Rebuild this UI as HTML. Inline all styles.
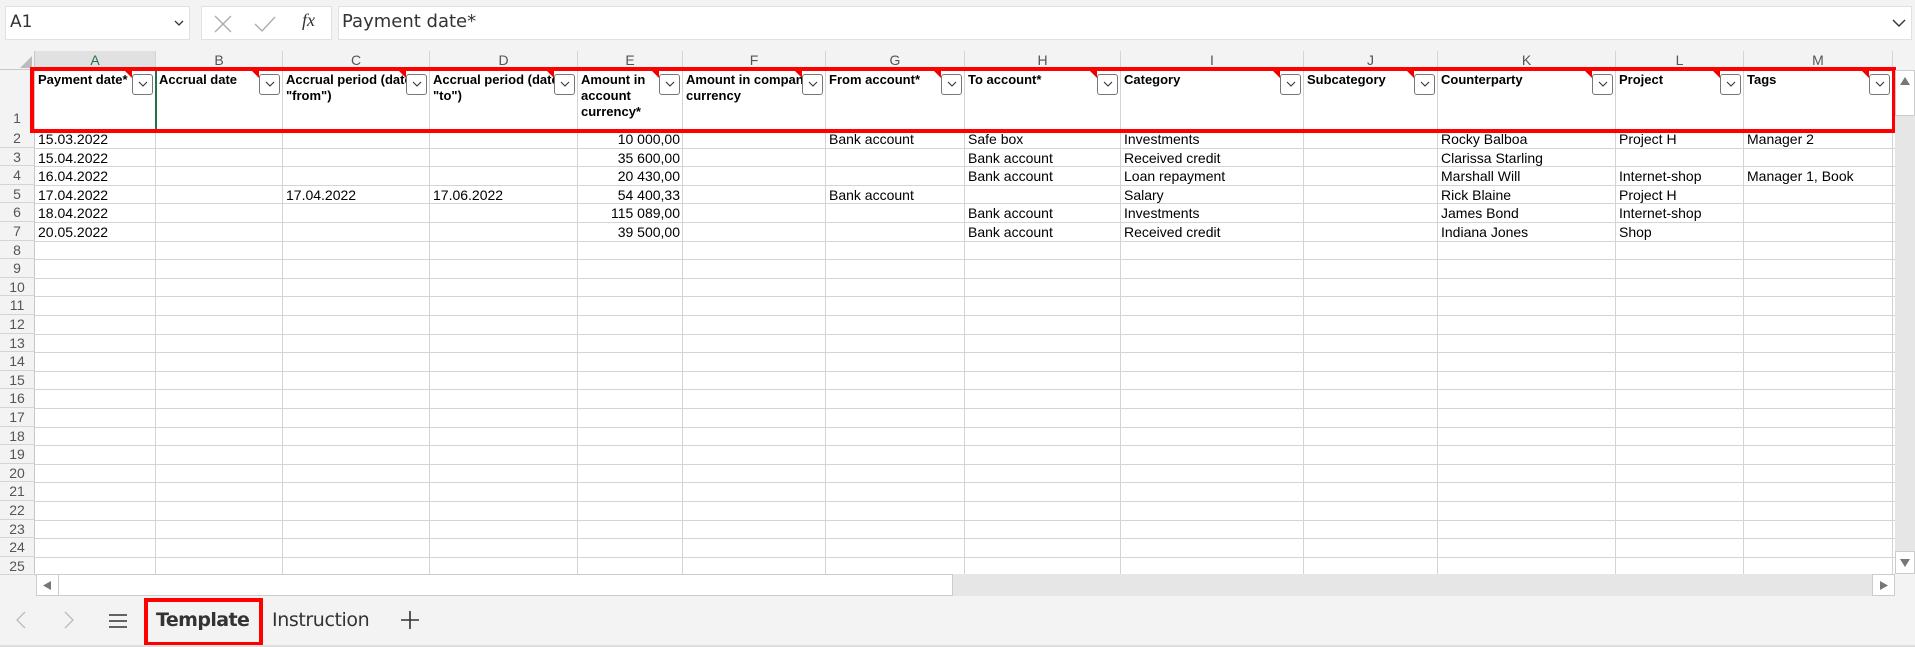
<!DOCTYPE html>
<html><head><meta charset="utf-8">
<style>
*{box-sizing:border-box;margin:0;padding:0}
body{width:1915px;height:647px;overflow:hidden;background:#f3f3f3;font-family:"Liberation Sans",Arial,sans-serif;position:relative}
.abs{position:absolute}
.cell{position:absolute;font-size:14px;color:#000;white-space:nowrap;overflow:hidden;line-height:18px;padding-left:3px}
.hd{position:absolute;top:51px;height:19px;font-size:14px;color:#555;text-align:center;line-height:19px;background:#f3f3f3;border-right:1px solid #d4d4d4;border-bottom:1px solid #d4d4d4}
.rn{position:absolute;left:0;width:35px;font-size:14px;color:#555;text-align:center;background:#f3f3f3;border-bottom:1px solid #d4d4d4;border-right:1px solid #c8c8c8}
.h1{position:absolute;top:72px;font-size:13px;font-weight:bold;line-height:16px;white-space:normal;overflow:hidden;padding-left:3px}
.btn{position:absolute;top:74px;width:21px;height:21px;border:1px solid #777;border-radius:3px;background:#fff}
.btn svg{position:absolute;left:5px;top:6px}
.tri{position:absolute;top:71px;width:0;height:0;border-top:7px solid #e00;border-left:7px solid transparent}
</style></head><body>
<!-- top bar -->
<div class="abs" style="left:5px;top:6px;width:185px;height:34px;background:#fff;border:1px solid #e1e1e1"></div>
<div class="abs" style="left:10px;top:12px;font-size:17px;color:#333;font-family:'DejaVu Sans',sans-serif">A1</div>
<svg class="abs" style="left:174px;top:20px" width="10" height="7"><path d="M1 1 L5 5 L9 1" stroke="#333" stroke-width="1.3" fill="none"/></svg>
<div class="abs" style="left:201px;top:6px;width:131px;height:34px;background:#fff;border:1px solid #e1e1e1"></div>
<svg class="abs" style="left:213px;top:14px" width="20" height="20"><path d="M2 2 L18 18 M18 2 L2 18" stroke="#aaa" stroke-width="1.3"/></svg>
<svg class="abs" style="left:253px;top:14px" width="24" height="20"><path d="M2 10 L9 17 L22 3" stroke="#aaa" stroke-width="1.3" fill="none"/></svg>
<div class="abs" style="left:302px;top:10px;font-size:18px;font-style:italic;font-family:'Liberation Serif',serif;color:#333">fx</div>
<div class="abs" style="left:338px;top:6px;width:1574px;height:34px;background:#fff;border:1px solid #e1e1e1"></div>
<div class="abs" style="left:342px;top:11px;font-size:18px;color:#333;font-family:'DejaVu Sans',sans-serif">Payment date*</div>
<svg class="abs" style="left:1892px;top:19px" width="14" height="9"><path d="M1 1 L7 7 L13 1" stroke="#333" stroke-width="1.4" fill="none"/></svg>

<div class="abs" style="left:35px;top:70px;width:1860px;height:504px;background:#fff"></div>
<div class="abs" style="left:0;top:51px;width:35px;height:19px;background:#f3f3f3;border-right:1px solid #c8c8c8;border-bottom:1px solid #c8c8c8"></div>
<svg class="abs" style="left:19px;top:55px" width="14" height="14"><path d="M13 1 L13 13 L1 13 Z" fill="#bbb"/></svg>

<div id="g"></div>
<script>
var W=[121,127,147,148,105,143,139,156,183,134,178,128,149];
var L=['A','B','C','D','E','F','G','H','I','J','K','L','M'];
var H=['Payment date*','Accrual date','Accrual period (date<br>"from")','Accrual period (date<br>"to")','Amount in account currency*','Amount in company<br>currency','From account*','To account*','Category','Subcategory','Counterparty','Project','Tags'];
var D={2:{A:'15.03.2022',E:'10 000,00',G:'Bank account',H:'Safe box',I:'Investments',K:'Rocky Balboa',L:'Project H',M:'Manager 2'},
3:{A:'15.04.2022',E:'35 600,00',H:'Bank account',I:'Received credit',K:'Clarissa Starling'},
4:{A:'16.04.2022',E:'20 430,00',H:'Bank account',I:'Loan repayment',K:'Marshall Will',L:'Internet-shop',M:'Manager 1, Book'},
5:{A:'17.04.2022',C:'17.04.2022',D:'17.06.2022',E:'54 400,33',G:'Bank account',I:'Salary',K:'Rick Blaine',L:'Project H'},
6:{A:'18.04.2022',E:'115 089,00',H:'Bank account',I:'Investments',K:'James Bond',L:'Internet-shop'},
7:{A:'20.05.2022',E:'39 500,00',H:'Bank account',I:'Received credit',K:'Indiana Jones',L:'Shop'}};
var s='',x=35,X=[];
for(var i=0;i<13;i++){X.push(x);
 s+='<div class="hd" style="left:'+x+'px;width:'+W[i]+'px;'+(i==0?'background:#e1e1e1;color:#217346;border-bottom:2px solid #217346':'')+'">'+L[i]+'</div>';
 s+='<div class="abs" style="left:'+(x+W[i]-1)+'px;top:70px;width:1px;height:504px;background:#d4d4d4"></div>';
 var nw=(i==2||i==3||i==5);
 var hw=nw?W[i]-3:W[i]-26;
 s+='<div class="h1" style="left:'+x+'px;width:'+hw+'px;height:56px;'+(nw?'white-space:nowrap':'')+'">'+H[i]+'</div>';
 s+='<div class="tri" style="left:'+(x+W[i]-31)+'px"></div>';
 s+='<div class="btn" style="left:'+(x+W[i]-24)+'px"><svg width="10" height="7"><path d="M1 1 L5 5 L9 1" stroke="#333" stroke-width="1.1" fill="none"/></svg></div>';
 x+=W[i];}
s+='<div class="rn" style="top:70px;height:60px;line-height:96px;background:#f3f3f3">1</div>';
s+='<div class="abs" style="left:35px;top:129px;width:1860px;height:1px;background:#d4d4d4"></div>';
for(var r=2;r<=25;r++){var t=130+(r-2)*18.6;
 s+='<div class="rn" style="top:'+(t-1)+'px;height:18.6px;line-height:19px">'+r+'</div>';
 s+='<div class="abs" style="left:35px;top:'+(t+17.6)+'px;width:1860px;height:1px;background:#d4d4d4"></div>';
 if(D[r])for(var k in D[r]){var ci=L.indexOf(k);var al=(k=='E')?'text-align:right;padding-right:3px;':'';
  s+='<div class="cell" style="left:'+X[ci]+'px;top:'+t+'px;width:'+W[ci]+'px;'+al+'">'+D[r][k]+'</div>';}}
document.getElementById('g').innerHTML=s;
</script>
<div class="abs" style="left:155px;top:70px;width:2px;height:59px;background:#217346"></div>
<div class="abs" style="left:30px;top:67px;width:1866px;height:66px;border:4px solid #f00"></div>
<div class="abs" style="left:1895px;top:70px;width:20px;height:504px;background:#e6e6e6"></div>
<div class="abs" style="left:1895px;top:70px;width:20px;height:46px;background:#fff;border:1px solid #ccc"></div>
<svg class="abs" style="left:1899px;top:76px" width="12" height="10"><path d="M6 1 L11 9 L1 9 Z" fill="#777"/></svg>
<div class="abs" style="left:1895px;top:551px;width:20px;height:23px;background:#fff;border:1px solid #ccc"></div>
<svg class="abs" style="left:1899px;top:558px" width="12" height="10"><path d="M1 1 L11 1 L6 9 Z" fill="#777"/></svg>
<div class="abs" style="left:36px;top:574px;width:1859px;height:22px;background:#e6e6e6"></div>
<div class="abs" style="left:36px;top:574px;width:917px;height:22px;background:#fff;border:1px solid #ccc"></div>
<div class="abs" style="left:36px;top:574px;width:23px;height:22px;background:#fff;border:1px solid #ccc"></div>
<svg class="abs" style="left:42px;top:580px" width="10" height="11"><path d="M9 1 L9 10 L1 5.5 Z" fill="#777"/></svg>
<div class="abs" style="left:1872px;top:574px;width:23px;height:22px;background:#fff;border:1px solid #ccc"></div>
<svg class="abs" style="left:1879px;top:580px" width="10" height="11"><path d="M1 1 L1 10 L9 5.5 Z" fill="#777"/></svg>
<svg class="abs" style="left:15px;top:610px" width="12" height="20"><path d="M10 2 L2 10 L10 18" stroke="#bbb" stroke-width="1.3" fill="none"/></svg>
<svg class="abs" style="left:63px;top:610px" width="12" height="20"><path d="M2 2 L10 10 L2 18" stroke="#bbb" stroke-width="1.3" fill="none"/></svg>
<svg class="abs" style="left:108px;top:613px" width="20" height="16"><path d="M1 2 H19 M1 8 H19 M1 14 H19" stroke="#333" stroke-width="1.5"/></svg>
<div class="abs" style="left:144px;top:598px;width:119px;height:48px;border:4px solid #f00;background:#f3f3f3"></div>
<div class="abs" style="left:156px;top:609px;font-size:19px;font-weight:bold;color:#333;font-family:'DejaVu Sans',sans-serif;letter-spacing:-0.6px">Template</div>
<div class="abs" style="left:272px;top:609px;font-size:19px;color:#333;font-family:'DejaVu Sans',sans-serif;letter-spacing:-0.4px">Instruction</div>
<svg class="abs" style="left:400px;top:610px" width="20" height="20"><path d="M10 1 V19 M1 10 H19" stroke="#333" stroke-width="1.6"/></svg>
<div class="abs" style="left:0;top:645px;width:1915px;height:2px;background:#ddd"></div>
</body></html>
